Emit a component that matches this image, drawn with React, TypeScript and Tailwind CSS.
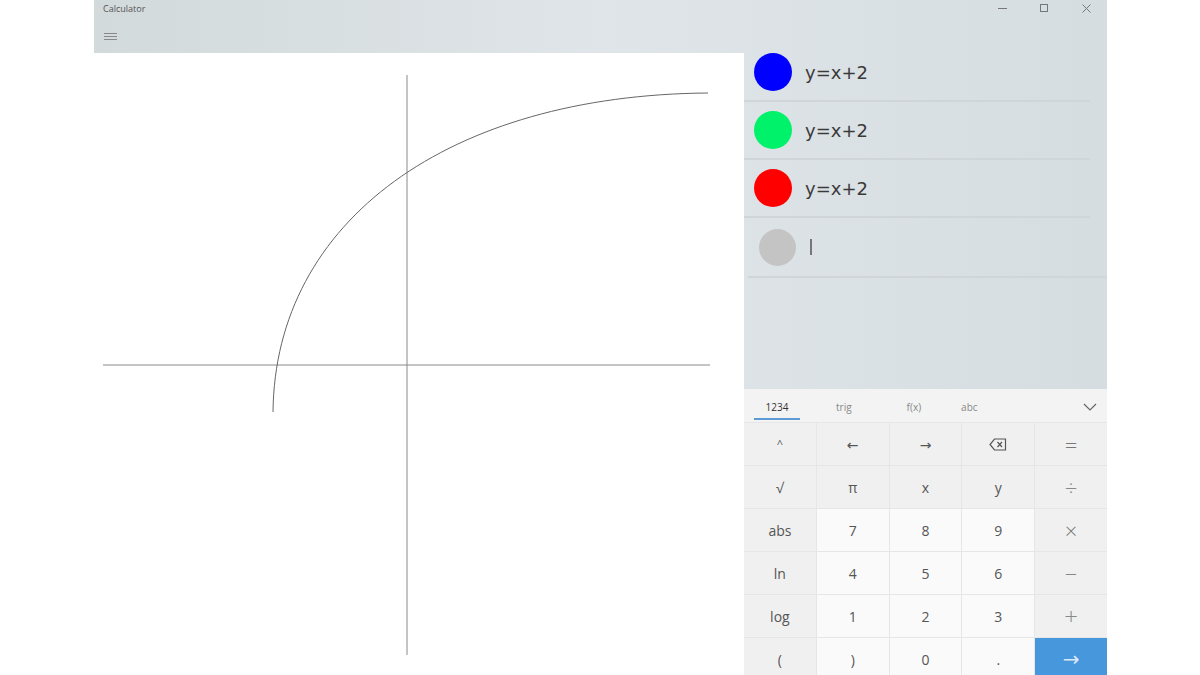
import React from "react";

const font = { fontFamily: '"Open Sans", "Noto Sans", "DejaVu Sans", sans-serif' };

type Key = { label: React.ReactNode; kind: "op" | "num" | "sym" | "go" };

const Backspace = () => (
  <svg width="18" height="13" viewBox="0 0 18 13" fill="none" stroke="#555" strokeWidth="1.2">
    <path d="M5.5 1 H16.5 V12 H5.5 L1 6.5 Z" />
    <path d="M8.5 4 L13 9 M13 4 L8.5 9" />
  </svg>
);

const keys: Key[] = [
  { label: <span className="text-[11px]">^</span>, kind: "op" },
  { label: "←", kind: "op" },
  { label: "→", kind: "op" },
  { label: <Backspace />, kind: "op" },
  { label: <span className="text-[22px] font-light text-[#777]">=</span>, kind: "op" },
  { label: "√", kind: "op" },
  { label: "π", kind: "op" },
  { label: "x", kind: "op" },
  { label: "y", kind: "op" },
  { label: <span className="text-[22px] font-light text-[#888]">÷</span>, kind: "op" },
  { label: "abs", kind: "op" },
  { label: "7", kind: "num" },
  { label: "8", kind: "num" },
  { label: "9", kind: "num" },
  { label: <span className="text-[22px] font-light text-[#777]">×</span>, kind: "op" },
  { label: "ln", kind: "op" },
  { label: "4", kind: "num" },
  { label: "5", kind: "num" },
  { label: "6", kind: "num" },
  { label: <span className="text-[22px] font-light text-[#888]">−</span>, kind: "op" },
  { label: "log", kind: "op" },
  { label: "1", kind: "num" },
  { label: "2", kind: "num" },
  { label: "3", kind: "num" },
  { label: <span className="text-[24px] font-light text-[#888]">+</span>, kind: "op" },
  { label: "(", kind: "op" },
  { label: ")", kind: "num" },
  { label: "0", kind: "num" },
  { label: ".", kind: "num" },
  { label: <span className="text-[20px] text-[#dbe9f8]">→</span>, kind: "go" },
];

const eqs = [
  { color: "bg-[#0000ff]", first: true },
  { color: "bg-[#00f26a]", first: false },
  { color: "bg-[#ff0000]", first: false },
];

export default function App() {
  return (
    <div className="w-[1200px] h-[675px] bg-white flex overflow-hidden" style={font}>
      <div className="w-[94px] shrink-0" />
      <div className="w-[1013px] shrink-0 flex flex-col bg-gradient-to-r from-[#d3dadb] via-[#dfe5e8] to-[#d6dde0]">
        {/* header */}
        <div className="h-[53px] flex flex-col shrink-0">
          <div className="h-[26px] flex items-start justify-between">
            <span className="text-[9px] text-[#555] pl-[9px] pt-[2px]">Calculator</span>
            <div className="flex items-start pt-[1px] text-[#555]">
              <div className="w-[42px] h-[14px] flex items-center justify-center">
                <div className="w-[9px] h-[1px] bg-[#777]" />
              </div>
              <div className="w-[42px] h-[14px] flex items-center justify-center">
                <div className="w-[8px] h-[8px] border border-[#777]" />
              </div>
              <div className="w-[42px] h-[14px] flex items-center justify-center">
                <svg width="9" height="9" viewBox="0 0 9 9" stroke="#777" strokeWidth="1">
                  <path d="M0.5 0.5 L8.5 8.5 M8.5 0.5 L0.5 8.5" />
                </svg>
              </div>
            </div>
          </div>
          <div className="pl-[10px] pt-[7px]">
            <div className="w-[13px] flex flex-col gap-[2px]">
              <div className="h-[1px] bg-[#888]" />
              <div className="h-[1px] bg-[#888]" />
              <div className="h-[1px] bg-[#888]" />
            </div>
          </div>
        </div>
        {/* body */}
        <div className="flex flex-1 min-h-0">
          <div className="w-[650px] shrink-0 bg-white">
            <svg width="650" height="622" viewBox="0 0 650 622">
              <line x1="313" y1="22" x2="313" y2="602" stroke="#8a8a8a" strokeWidth="1" />
              <line x1="9" y1="312" x2="616" y2="312" stroke="#8a8a8a" strokeWidth="1" />
              <path d="M179 359 C181 167 356 42 614 40" fill="none" stroke="#666" strokeWidth="1" />
            </svg>
          </div>
          <div className="w-[363px] shrink-0 flex flex-col overflow-hidden">
            <div className="h-[336px] shrink-0 flex flex-col">
              {eqs.map((e, i) => (
                <div
                  key={i}
                  className={`${e.first ? "h-[49px] pb-[9px]" : "h-[58px]"} mr-[17px] flex items-center border-b-2 border-[#cfd5d8] shrink-0`}
                >
                  <div className={`w-[38px] h-[38px] rounded-full ${e.color} ml-[10px]`} />
                  <span className="ml-[13px] text-[18px] text-[#3a3a3a]" style={{ fontFamily: '"DejaVu Sans", sans-serif' }}>
                    y=x+2
                  </span>
                </div>
              ))}
              <div className="h-[60px] ml-[4px] flex items-center border-b-2 border-[#cfd5d8] shrink-0">
                <div className="w-[37px] h-[37px] rounded-full bg-[#c4c4c4] ml-[11px]" />
                <div className="ml-[14px] w-[2px] h-[16px] bg-[#777]" />
              </div>
            </div>
            {/* keypad */}
            <div className="flex-1 flex flex-col bg-[#e6e6e6] gap-[1px]">
              <div className="h-[33px] shrink-0 bg-[#f3f3f3] flex items-center pt-[3px] relative text-[10px] text-[#555]">
                <div className="ml-[10px] w-[46px] h-full flex flex-col items-center justify-center relative">
                  <span className="text-[#333]">1234</span>
                  <div className="absolute bottom-[2px] left-0 right-0 h-[2px] bg-[#5d9ad8]" />
                </div>
                <span className="ml-[36px] text-[#888]">trig</span>
                <span className="ml-[55px] text-[#888]">f(x)</span>
                <span className="ml-[40px] text-[#888]">abc</span>
                <svg className="ml-auto mr-[10px]" width="14" height="8" viewBox="0 0 14 8" fill="none" stroke="#666" strokeWidth="1.2">
                  <path d="M1 1 L7 7 L13 1" />
                </svg>
              </div>
              <div className="grid grid-cols-5 gap-[1px]">
                {keys.map((k, i) => (
                  <div
                    key={i}
                    className={`h-[42px] flex items-center justify-center text-[14px] text-[#555] ${
                      k.kind === "num" ? "bg-[#fafafa]" : k.kind === "go" ? "bg-[#4697dc]" : "bg-[#f0f0f0]"
                    }`}
                  >
                    {k.label}
                  </div>
                ))}
              </div>
            </div>
          </div>
        </div>
      </div>
    </div>
  );
}
